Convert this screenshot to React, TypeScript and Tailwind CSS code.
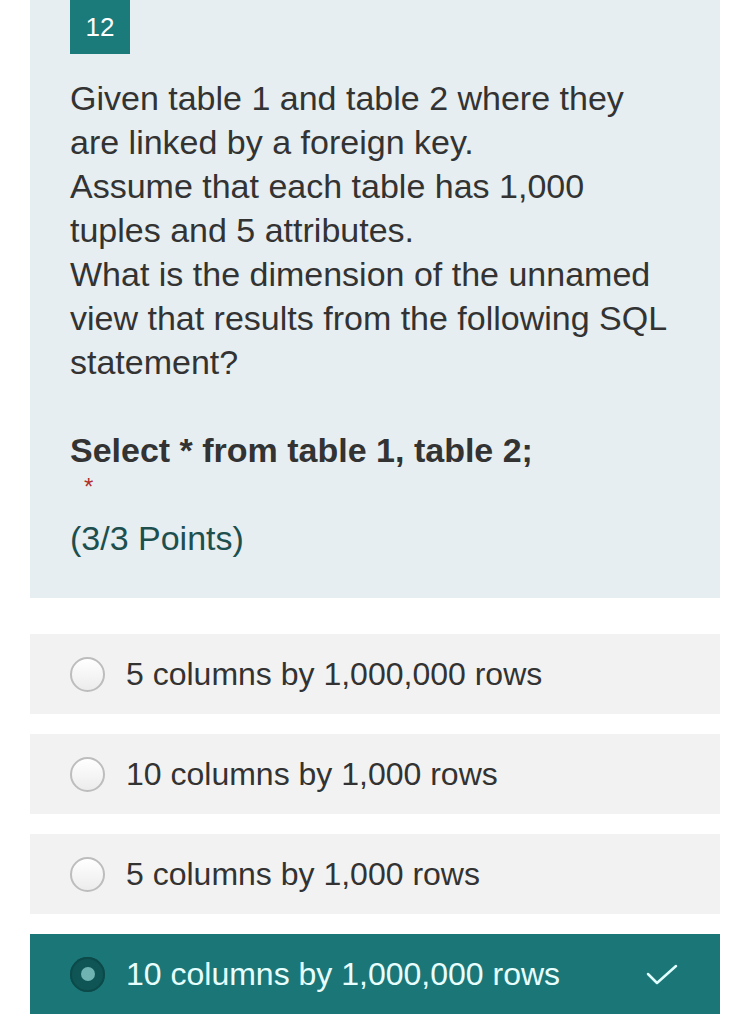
import React from 'react';

const options = [
  { label: '5 columns by 1,000,000 rows', selected: false },
  { label: '10 columns by 1,000 rows', selected: false },
  { label: '5 columns by 1,000 rows', selected: false },
  { label: '10 columns by 1,000,000 rows', selected: true },
];

export default function App() {
  return (
    <div className="w-[750px] h-[1014px] bg-white overflow-hidden" style={{ fontFamily: '"Liberation Sans", Arial, sans-serif' }}>
      <div className="mx-[30px] bg-[#e6eef1] pl-10 pr-10 pb-[38px]">
        <div className="w-[60px] h-[54px] bg-[#1b7b7b] text-white text-[26px] flex items-center justify-center">12</div>
        <div className="mt-[22px] text-[34px] leading-[44px] text-[#333]">
          Given table 1 and table 2 where they are linked by a foreign key.
          <br />
          Assume that each table has 1,000 tuples and 5 attributes.
          <br />
          What is the dimension of the unnamed view that results from the following SQL statement?
        </div>
        <div className="mt-[44px] text-[34px] leading-[44px] font-bold text-[#333]">Select * from table 1, table 2;</div>
        <div className="pl-[14px] h-[30px] text-[24px] leading-[30px] text-[#b0302a]">*</div>
        <div className="mt-[14px] text-[34px] leading-[44px] text-[#1d4f4f]">(3/3 Points)</div>
      </div>
      <div className="mx-[30px] mt-[36px] flex flex-col gap-5">
        {options.map((o) => (
          <div
            key={o.label}
            className={`h-20 flex items-center pl-10 pr-[42px] ${o.selected ? 'bg-[#1b7777]' : 'bg-[#f2f2f2]'}`}
          >
            {o.selected ? (
              <div className="w-[35px] h-[35px] rounded-full bg-[#0f5555] flex items-center justify-center shadow-[inset_0_0_0_2px_#0c4a4a]">
                <div className="w-[14px] h-[14px] rounded-full bg-[#6fb3b3]" />
              </div>
            ) : (
              <div className="w-[35px] h-[35px] rounded-full border-2 border-[#bdbdbd] bg-gradient-to-b from-white to-[#ececec]" />
            )}
            <div className={`ml-[21px] flex-1 text-[32px] ${o.selected ? 'text-[#e8ffff]' : 'text-[#333]'}`}>{o.label}</div>
            {o.selected && (
              <svg width="32" height="22" viewBox="0 0 32 22" fill="none" stroke="#e0ffff" strokeWidth="2.5" strokeLinecap="round" strokeLinejoin="round">
                <path d="M2 11 L11 20 L30 3" />
              </svg>
            )}
          </div>
        ))}
      </div>
    </div>
  );
}
